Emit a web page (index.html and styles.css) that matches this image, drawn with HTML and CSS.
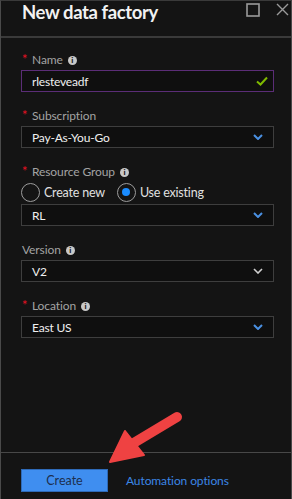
FILE: index.html
```html
<!DOCTYPE html>
<html>
<head>
<meta charset="utf-8">
<link rel="stylesheet" href="styles.css">
</head>
<body>
<div class="blade">
  <header class="blade-header">
    <h1 class="title">New data factory</h1>
    <div class="header-icons">
      <svg class="icon-max" width="14" height="14" viewBox="0 0 14 14"><rect x="1" y="1" width="12" height="12" fill="none" stroke="#9a9a9a" stroke-width="1.6"/></svg>
      <svg class="icon-close" width="13" height="13" viewBox="0 0 13 13"><path d="M1 1 L12 12 M12 1 L1 12" stroke="#9a9a9a" stroke-width="1.4"/></svg>
    </div>
  </header>

  <main class="form">
    <div class="field">
      <div class="label"><span class="req">*</span>Name<span class="info">i</span></div>
      <div class="box box-active">
        <span class="value">rlesteveadf</span>
        <svg class="check" width="12" height="10" viewBox="0 0 12 10"><path d="M1 5.5 L4.5 8.5 L11 1.5" fill="none" stroke="#7fba00" stroke-width="2"/></svg>
      </div>
    </div>

    <div class="field">
      <div class="label"><span class="req">*</span>Subscription</div>
      <div class="box">
        <span class="value">Pay-As-You-Go</span>
        <svg class="chev" width="10" height="6" viewBox="0 0 10 6"><path d="M1 1 L5 5 L9 1" fill="none" stroke="#4a90e2" stroke-width="2"/></svg>
      </div>
    </div>

    <div class="field">
      <div class="label"><span class="req">*</span>Resource Group<span class="info">i</span></div>
      <div class="radios">
        <label class="radio"><span class="circle"></span>Create new</label>
        <label class="radio"><span class="circle checked"></span>Use existing</label>
      </div>
      <div class="box">
        <span class="value">RL</span>
        <svg class="chev" width="10" height="6" viewBox="0 0 10 6"><path d="M1 1 L5 5 L9 1" fill="none" stroke="#4a90e2" stroke-width="2"/></svg>
      </div>
    </div>

    <div class="field">
      <div class="label label-plain">Version<span class="info">i</span></div>
      <div class="box">
        <span class="value">V2</span>
        <svg class="chev" width="10" height="6" viewBox="0 0 10 6"><path d="M1 1 L5 5 L9 1" fill="none" stroke="#d0d0d0" stroke-width="1.6"/></svg>
      </div>
    </div>

    <div class="field">
      <div class="label"><span class="req">*</span>Location<span class="info">i</span></div>
      <div class="box">
        <span class="value">East US</span>
        <svg class="chev" width="10" height="6" viewBox="0 0 10 6"><path d="M1 1 L5 5 L9 1" fill="none" stroke="#4a90e2" stroke-width="2"/></svg>
      </div>
    </div>
  </main>

  <footer class="blade-footer">
    <button class="btn-create">Create</button>
    <a class="link">Automation options</a>
  </footer>

  <svg class="arrow" width="292" height="499" viewBox="0 0 292 499">
    <line x1="132" y1="444" x2="177" y2="417" stroke="#ef4242" stroke-width="10" stroke-linecap="round"/>
    <polygon points="110,462 125,431 144,455" fill="#ef4242" stroke="#ef4242" stroke-width="2" stroke-linejoin="round"/>
  </svg>
</div>
</body>
</html>
```

FILE: styles.css
```css
* { box-sizing: border-box; }
html, body {
  margin: 0;
  padding: 0;
  background: #141414;
}
body {
  font-family: "Lato", "Liberation Sans", sans-serif;
  color: #e6e6e6;
  width: 292px;
  height: 499px;
  overflow: hidden;
}
.blade {
  position: relative;
  width: 292px;
  height: 499px;
  background: #141414;
  border-left: 1px solid #4a4a4a;
  border-right: 1px solid #4a4a4a;
  border-top: 1px solid #3a3a3a;
  display: flex;
  flex-direction: column;
}
.blade-header {
  height: 37px;
  border-bottom: 2px solid #3a3a3a;
  display: flex;
  align-items: flex-start;
  justify-content: space-between;
  padding: 0 2px 0 21px;
}
.title {
  margin: 0;
  font-size: 18.5px;
  line-height: 22px;
  font-weight: 700;
  color: #f2f2f2;
  letter-spacing: -0.4px;
}
.header-icons {
  display: flex;
  gap: 16px;
  padding-top: 2px;
}
.form {
  flex: 1;
  padding: 14px 17px 0 20px;
}
.field {
  margin-bottom: 16px;
}
.label {
  height: 16px;
  line-height: 16px;
  font-size: 12px;
  color: #a3a3a3;
  display: flex;
  align-items: center;
  margin-bottom: 2px;
  letter-spacing: -0.1px;
}
.req {
  color: #e81123;
  font-size: 13px;
  width: 11px;
  padding-left: 1px;
  line-height: 12px;
  align-self: flex-start;
  margin-top: 1px;
}
.label-plain { padding-left: 1px; }
.info {
  display: inline-flex;
  align-items: center;
  justify-content: center;
  width: 9px;
  height: 9px;
  border-radius: 50%;
  background: #c8c8c8;
  color: #141414;
  font-size: 8px;
  font-weight: 900;
  margin-left: 5px;
  line-height: 9px;
}
.box {
  height: 22px;
  border: 1px solid #3e3e3e;
  background: #0f0f0f;
  display: flex;
  align-items: center;
  justify-content: space-between;
  padding: 0 10px 0 10px;
}
.box-active {
  border: 1px solid #5b2d77;
  padding-right: 5px;
}
.value {
  font-size: 12px;
  color: #f0f0f0;
  letter-spacing: -0.2px;
}
.chev { margin-right: 0; }
.radios {
  display: flex;
  align-items: center;
  height: 20px;
  margin-bottom: 2px;
  gap: 12px;
}
.radio {
  display: flex;
  align-items: center;
  gap: 4px;
  font-size: 12.5px;
  color: #e0e0e0;
  letter-spacing: -0.2px;
}
.circle {
  width: 19px;
  height: 19px;
  border-radius: 50%;
  border: 1.5px solid #9c9c9c;
  display: flex;
  align-items: center;
  justify-content: center;
}
.circle.checked::after {
  content: "";
  width: 8px;
  height: 8px;
  border-radius: 50%;
  background: #1a8cff;
}
.blade-footer {
  border-top: 1px solid #484848;
  height: 47px;
  padding: 16px 0 0 20px;
  display: flex;
  align-items: flex-start;
  gap: 18px;
}
.btn-create {
  width: 87px;
  height: 23px;
  background: #3f8ef0;
  border: 1px solid #2e6ab8;
  color: #1d2f4e;
  font-family: "Lato", "Liberation Sans", sans-serif;
  font-size: 12.5px;
  padding: 0;
}
.link {
  color: #3b86e6;
  font-size: 12px;
  line-height: 23px;
  letter-spacing: -0.1px;
}
.arrow {
  position: absolute;
  left: -1px;
  top: -1px;
  pointer-events: none;
}
```
